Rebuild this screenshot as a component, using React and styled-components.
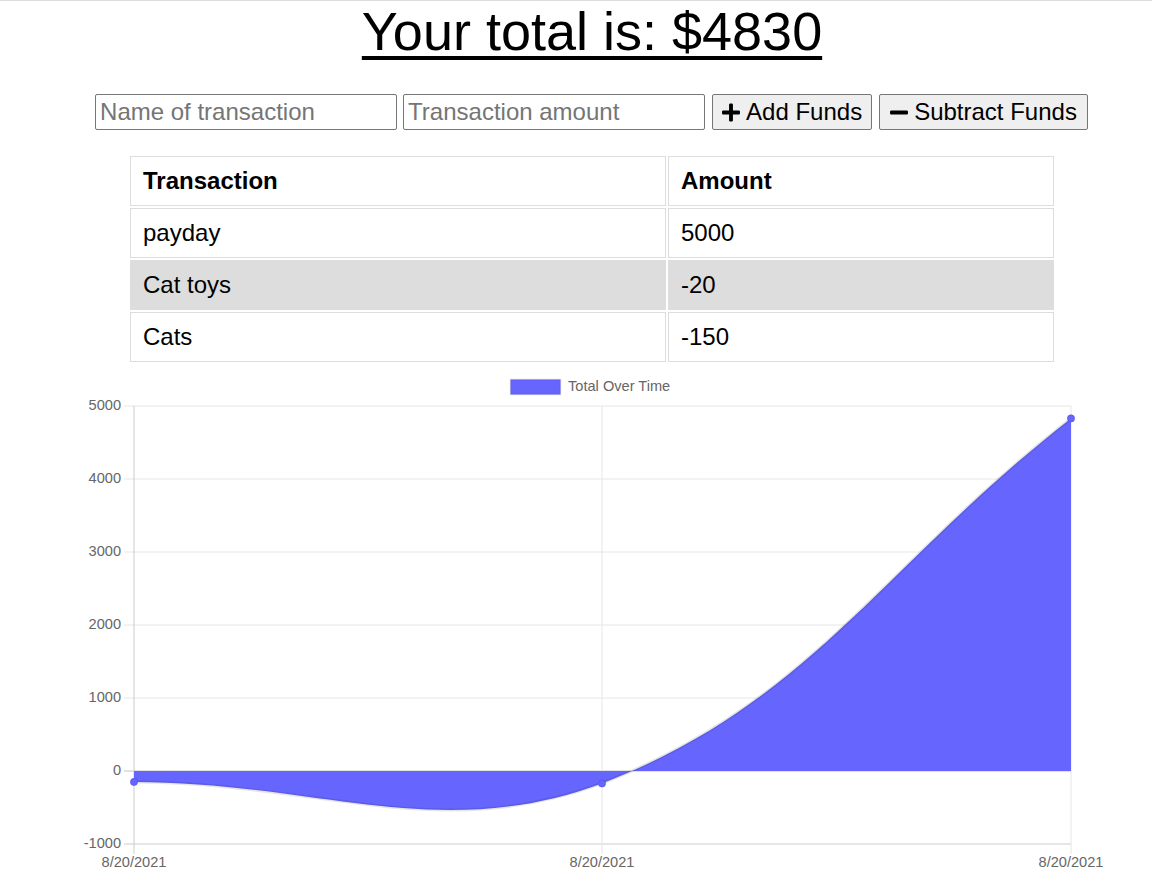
import React from "react";
import styled, { createGlobalStyle } from "styled-components";

const Global = createGlobalStyle`
  html, body { margin: 0; padding: 0; background: #fff; overflow: hidden; }
  body { font-family: "Liberation Sans", Arial, Helvetica, sans-serif; color: #000; }
  * { box-sizing: border-box; }
`;

const Page = styled.div`
  width: 1152px;
  height: 875px;
  border-top: 1px solid #dcdcdc;
  padding-left: 32px;
  display: flex;
  flex-direction: column;
  align-items: center;
`;

const Title = styled.h1`
  margin: 0;
  font-size: 54px;
  font-weight: 400;
  line-height: 61px;
  text-decoration: underline;
  text-decoration-thickness: 4px;
  text-underline-offset: 6px;
`;

const Form = styled.div`
  display: flex;
  gap: 6px;
  margin-top: 32px;
  margin-left: -1px;
  height: 36px;
`;

const Input = styled.input`
  width: 302px;
  height: 36px;
  font-family: inherit;
  font-size: 24px;
  padding: 1px 4px;
  border: 1px solid #767676;
  border-radius: 2px;
  &::placeholder { color: #757575; }
`;

const Button = styled.button`
  height: 36px;
  margin-left: 1px;
  display: flex;
  align-items: center;
  gap: 6px;
  padding: 0 ${(p) => p.$pad || "9px"};
  font-family: inherit;
  font-size: 24px;
  color: #000;
  background: #efefef;
  border: 1px solid #767676;
  border-radius: 2px;
`;

const Icon = styled.svg`
  width: 18px;
  height: 21px;
  display: block;
`;

const Table = styled.table`
  margin-top: 24px;
  width: 928px;
  border-collapse: separate;
  border-spacing: 2px;
  font-size: 24px;
`;

const Cell = styled.td`
  border: 1px solid #dddddd;
  padding: 10px 12px;
  line-height: 28px;
  text-align: left;
  background: ${(p) => (p.$shade ? "#dddddd" : "transparent")};
  font-weight: ${(p) => (p.$head ? 700 : 400)};
  width: ${(p) => p.$w || "auto"};
`;

const ChartWrap = styled.div`
  width: 1056px;
  height: 510px;
  margin-top: 3px;
`;

const ChartSvg = styled.svg`
  display: block;
  font-family: "Liberation Sans", Arial, Helvetica, sans-serif;
`;

const PlusIcon = () => (
  <Icon viewBox="0 32 448 448">
    <path d="M416 208H272V64c0-17.670-14.330-32-32-32h-32c-17.670 0-32 14.330-32 32v144H32c-17.670 0-32 14.330-32 32v32c0 17.670 14.330 32 32 32h144v144c0 17.670 14.330 32 32 32h32c17.670 0 32-14.330 32-32V304h144c17.670 0 32-14.330 32-32v-32c0-17.670-14.330-32-32-32z" />
  </Icon>
);

const MinusIcon = () => (
  <Icon viewBox="0 32 448 448">
    <path d="M416 208H32c-17.670 0-32 14.330-32 32v32c0 17.670 14.330 32 32 32h384c17.670 0 32-14.330 32-32v-32c0-17.670-14.330-32-32-32z" />
  </Icon>
);

const rows = [
  { name: "payday", value: "5000" },
  { name: "Cat toys", value: "-20" },
  { name: "Cats", value: "-150" },
];

const OX = 64;
const OY = 366;
const left = 134;
const right = 1071;
const top = 405;
const zeroY = 770;
const perK = 73;
const yFor = (v) => zeroY - (v / 1000) * perK;

const Chart = () => {
  const pts = [
    [134, yFor(-150)],
    [602, yFor(-170)],
    [1071, yFor(4830)],
  ];
  const curve = `C321.2,781.5 436.9,843 ${pts[1][0]},${pts[1][1]} C811.7,701.05 883.4,563.4 ${pts[2][0]},${pts[2][1]}`;
  const line = `M${pts[0][0]},${pts[0][1]} ${curve}`;
  const fill = `M${left},${zeroY} L${pts[0][0]},${pts[0][1]} ${curve} L${right},${zeroY} Z`;
  const yTicks = [5000, 4000, 3000, 2000, 1000, 0, -1000];
  const xTicks = [134, 602, 1071];
  return (
    <ChartSvg width="1056" height="510" viewBox="0 0 1056 510">
      <g transform={`translate(${-OX},${-OY})`}>
        {yTicks.map((v) => (
          <line
            key={v}
            x1={124}
            x2={right}
            y1={yFor(v)}
            y2={yFor(v)}
            stroke={v === 0 ? "#c4c4c4" : v === -1000 ? "#cccccc" : "#e6e6e6"}
            strokeWidth="1"
          />
        ))}
        {xTicks.map((x, i) => (
          <line
            key={x}
            x1={x}
            x2={x}
            y1={top}
            y2={853}
            stroke={i === 0 ? "#cccccc" : "#e6e6e6"}
            strokeWidth="1"
          />
        ))}
        <path d={fill} fill="#6666ff" />
        <path d={line} fill="none" stroke="rgba(0,0,0,0.1)" strokeWidth="3" />
        {pts.map((p, i) => (
          <circle key={i} cx={p[0]} cy={p[1]} r="3.6" fill="#6666ff" stroke="rgba(80,80,230,0.6)" strokeWidth="1" />
        ))}
        {yTicks.map((v) => (
          <text key={v} x={121} y={yFor(v)} textAnchor="end" dominantBaseline="middle" fontSize="14.6" fill="#666">
            {v}
          </text>
        ))}
        {xTicks.map((x) => (
          <text key={x} x={x} y={862} textAnchor="middle" dominantBaseline="middle" fontSize="14.6" fill="#666">
            8/20/2021
          </text>
        ))}
        <rect x="510.5" y="378.5" width="50" height="15" fill="#6666ff" stroke="rgba(0,0,0,0.1)" strokeWidth="1.5" />
        <text x="568" y="386" dominantBaseline="middle" fontSize="14.6" fill="#666">
          Total Over Time
        </text>
      </g>
    </ChartSvg>
  );
};

export default function App() {
  return (
    <>
      <Global />
      <Page>
        <Title>Your total is: $4830</Title>
        <Form>
          <Input placeholder="Name of transaction" />
          <Input placeholder="Transaction amount" />
          <Button>
            <PlusIcon />
            Add Funds
          </Button>
          <Button $pad="10px">
            <MinusIcon />
            Subtract Funds
          </Button>
        </Form>
        <Table>
          <thead>
            <tr>
              <Cell as="th" $head $w="536px">Transaction</Cell>
              <Cell as="th" $head>Amount</Cell>
            </tr>
          </thead>
          <tbody>
            {rows.map((r, i) => (
              <tr key={r.name}>
                <Cell $shade={i === 1}>{r.name}</Cell>
                <Cell $shade={i === 1}>{r.value}</Cell>
              </tr>
            ))}
          </tbody>
        </Table>
        <ChartWrap>
          <Chart />
        </ChartWrap>
      </Page>
    </>
  );
}
